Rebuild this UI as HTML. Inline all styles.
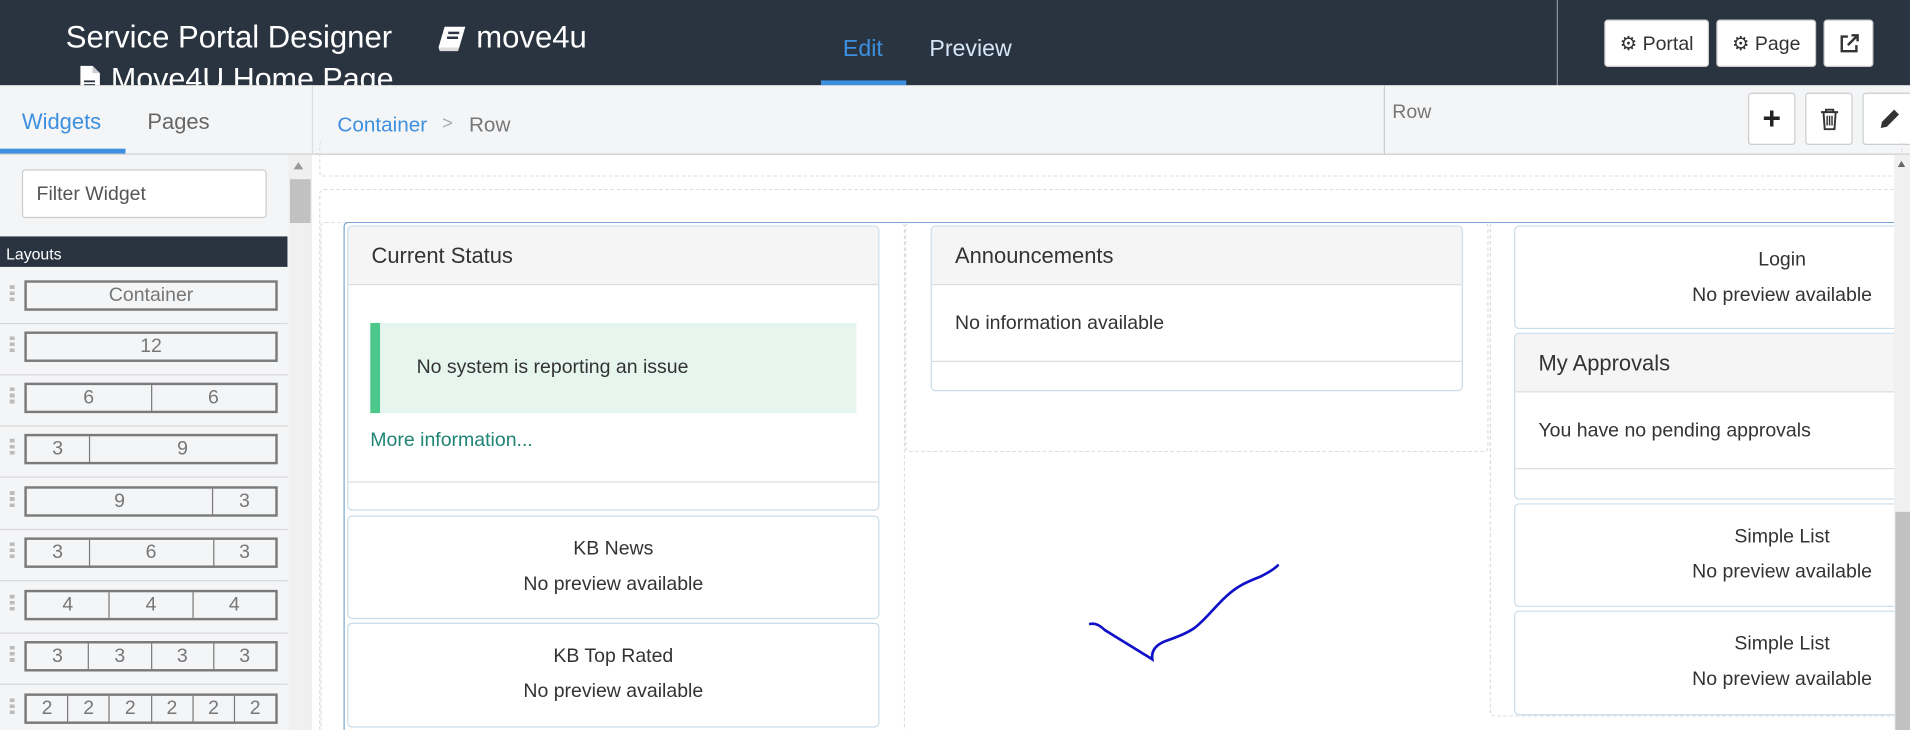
<!DOCTYPE html>
<html><head><meta charset="utf-8"><style>
*{box-sizing:border-box;margin:0;padding:0}
html,body{width:1910px;height:730px;overflow:hidden;background:#fff}
body{font-family:"Liberation Sans",Arial,sans-serif;color:#333}
#s{position:absolute;left:0;top:0;width:1568px;height:599px;transform:scale(1.2181,1.2187);transform-origin:0 0;overflow:hidden}
.a{position:absolute}
.hdr{left:0;top:0;width:1568px;height:70px;background:#2a3440;overflow:hidden}
.btn{background:#fff;border:1px solid #ccc;border-radius:3px;color:#333;font-size:16px;display:flex;align-items:center;justify-content:center;gap:5px}
.bar{left:0;top:70px;width:1568px;height:57px;background:#f4f5f7;border-bottom:1px solid #ccc}
.side{left:0;top:127px;width:256px;height:472px;background:#f4f5f7;border-right:1px solid #ddd}
.lrow{position:absolute;left:0;width:236px;height:42px;border-bottom:1px solid #d8d8d8}
.lbox{position:absolute;left:20px;top:6px;width:208px;height:25px;border:2px solid #7a7a7a;display:flex;background:#f4f5f7}
.lbox div{border-right:1px solid #7a7a7a;text-align:center;font-size:16px;color:#777;line-height:21px}
.lbox div:last-child{border-right:none}
.grip{position:absolute;left:8px;top:10px;width:4px;height:14px;background:repeating-linear-gradient(#bbb 0 3px,transparent 3px 5px)}
.dash{border:1px dashed #ddd;border-radius:4px}
.card{border:1px solid #c9dce9;border-radius:4px;background:#fff;overflow:hidden}
.ph{background:#f5f5f5;border-bottom:1px solid #ddd;height:48px;padding-left:19px;font-size:18px;line-height:48px;color:#333}
.np{text-align:center;font-size:16px;color:#333}
</style></head><body><div id="s">

<div class="a hdr">
 <div class="a" style="left:54px;top:17px;font-size:25.5px;color:#fff">Service Portal Designer</div>
 <svg class="a" style="left:359px;top:21px" width="26" height="22" viewBox="0 0 26 22"><path d="M6 1h17l-5 17H1z" fill="#fff"/><path d="M1 18h17l-1 3H2z" fill="#ddd"/><rect x="9" y="5" width="9" height="2" fill="#2a3440"/><rect x="8" y="9" width="9" height="2" fill="#2a3440"/></svg>
 <div class="a" style="left:391px;top:17px;font-size:25.5px;color:#fff">move4u</div>
 <svg class="a" style="left:64px;top:54px" width="20" height="22" viewBox="0 0 20 22"><path d="M2 0h10l6 6v16H2z" fill="#fff"/><path d="M12 0v6h6" fill="#ccc"/><rect x="5" y="12" width="9" height="1.5" fill="#2a3440"/><rect x="5" y="15" width="9" height="1.5" fill="#2a3440"/></svg>
 <div class="a" style="left:91px;top:51px;font-size:25px;color:#fff">Move4U Home Page</div>
 <div class="a" style="left:692px;top:30px;font-size:19px;color:#3d8fe0">Edit</div>
 <div class="a" style="left:674px;top:66px;width:70px;height:4px;background:#3d8fe0"></div>
 <div class="a" style="left:763px;top:30px;font-size:19px;color:#d4e6f7">Preview</div>
 <div class="a" style="left:1278px;top:0;width:1px;height:70px;background:#8a939c"></div>
 <div class="a btn" style="left:1317px;top:16px;width:86px;height:39px">⚙&nbsp;Portal</div>
 <div class="a btn" style="left:1409px;top:16px;width:82px;height:39px">⚙&nbsp;Page</div>
 <div class="a btn" style="left:1497px;top:16px;width:41px;height:39px"><svg width="18" height="18" viewBox="0 0 18 18"><path d="M8 3H3v12h12v-5" fill="none" stroke="#333" stroke-width="2"/><path d="M8 10l8-8M11 2h5v5" fill="none" stroke="#333" stroke-width="2"/></svg></div>
</div>

<div class="a bar">
 <div class="a" style="left:256px;top:0;width:1px;height:57px;background:#ddd"></div>
 <div class="a" style="left:18px;top:20px;font-size:18px;color:#3d8fe0">Widgets</div>
 <div class="a" style="left:121px;top:20px;font-size:18px;color:#666">Pages</div>
 <div class="a" style="left:0;top:52px;width:103px;height:4px;background:#3d8fe0"></div>
 <div class="a" style="left:277px;top:23px;font-size:17px;color:#3d8fe0">Container</div>
 <div class="a" style="left:363px;top:23px;font-size:15px;color:#aaa">&gt;</div>
 <div class="a" style="left:385px;top:23px;font-size:17px;color:#777">Row</div>
 <div class="a" style="left:1136px;top:0;width:1px;height:57px;background:#ccc"></div>
 <div class="a" style="left:1143px;top:14px;font-size:16px;color:#777">Row</div>
 <div class="a btn" style="left:1435px;top:6px;width:39px;height:43px;font-size:26px;font-weight:bold;color:#222">+</div>
 <div class="a btn" style="left:1482px;top:6px;width:39px;height:43px"><svg width="16" height="18" viewBox="0 0 16 18"><path d="M1 3h14M5 3V1h6v2M3 3l1 14h8l1-14" fill="none" stroke="#333" stroke-width="1.6"/><path d="M6 6v8M8 6v8M10 6v8" stroke="#333" stroke-width="1.2"/></svg></div>
 <div class="a btn" style="left:1529px;top:6px;width:45px;height:43px;justify-content:flex-start;padding-left:12px"><svg width="18" height="18" viewBox="0 0 18 18"><path d="M2 16l1-5L13 1l4 4L7 15z" fill="#333"/></svg></div>
</div>

<div class="a side">
 <div class="a" style="left:237px;top:0;width:19px;height:472px;background:#f0f0f0"></div>
 <div class="a" style="left:241px;top:6px;width:0;height:0;border:4px solid transparent;border-bottom:6px solid #999;border-top:none"></div>
 <div class="a" style="left:238px;top:20px;width:17px;height:36px;background:#c1c1c1"></div>
 <div class="a" style="left:18px;top:12px;width:201px;height:40px;background:#fff;border:1px solid #ccc;border-radius:3px;font-size:16px;color:#555;padding:11px 0 0 11px">Filter Widget</div>
 <div class="a" style="left:0;top:67px;width:236px;height:25px;background:#2a3440;color:#fff;font-size:13px;padding:7px 0 0 5px">Layouts</div>
 <div class="lrow" style="top:97px"><div class="grip"></div><div class="lbox"><div style="flex:1">Container</div></div></div>
 <div class="lrow" style="top:139px"><div class="grip"></div><div class="lbox"><div style="flex:1">12</div></div></div>
 <div class="lrow" style="top:181px"><div class="grip"></div><div class="lbox"><div style="flex:6">6</div><div style="flex:6">6</div></div></div>
 <div class="lrow" style="top:223px"><div class="grip"></div><div class="lbox"><div style="flex:3">3</div><div style="flex:9">9</div></div></div>
 <div class="lrow" style="top:266px"><div class="grip"></div><div class="lbox"><div style="flex:9">9</div><div style="flex:3">3</div></div></div>
 <div class="lrow" style="top:308px"><div class="grip"></div><div class="lbox"><div style="flex:3">3</div><div style="flex:6">6</div><div style="flex:3">3</div></div></div>
 <div class="lrow" style="top:351px"><div class="grip"></div><div class="lbox"><div style="flex:1">4</div><div style="flex:1">4</div><div style="flex:1">4</div></div></div>
 <div class="lrow" style="top:393px"><div class="grip"></div><div class="lbox"><div style="flex:1">3</div><div style="flex:1">3</div><div style="flex:1">3</div><div style="flex:1">3</div></div></div>
 <div class="lrow" style="top:436px"><div class="grip"></div><div class="lbox"><div style="flex:1">2</div><div style="flex:1">2</div><div style="flex:1">2</div><div style="flex:1">2</div><div style="flex:1">2</div><div style="flex:1">2</div></div></div>
</div>

<!-- canvas -->
<div class="a dash" style="left:262px;top:115px;width:1300px;height:30px;border-top:none"></div>
<div class="a dash" style="left:262px;top:155px;width:1300px;height:460px"></div>
<div class="a dash" style="left:263px;top:182px;width:480px;height:430px"></div>
<div class="a dash" style="left:743px;top:182px;width:479px;height:189px"></div>
<div class="a dash" style="left:1223px;top:182px;width:340px;height:406px"></div>
<div class="a" style="left:282px;top:182px;width:1280px;height:430px;border:1px solid #7aa7cf;border-radius:4px;border-right:none"></div>

<div class="a card" style="left:285px;top:185px;width:437px;height:234px">
 <div class="ph">Current Status</div>
 <div class="a" style="left:18px;top:79px;width:399px;height:74px;background:#e6f6ee;border-left:8px solid #4bc88a;font-size:16px;padding:28px 0 0 30px;color:#333">No system is reporting an issue</div>
 <div class="a" style="left:18px;top:167px;font-size:16px;color:#1f8476">More information...</div>
 <div class="a" style="left:0;top:209px;width:437px;height:1px;background:#ddd"></div>
</div>
<div class="a card" style="left:285px;top:423px;width:437px;height:85px"><div class="np" style="margin-top:18px">KB News</div><div class="np" style="margin-top:11px">No preview available</div></div>
<div class="a card" style="left:285px;top:511px;width:437px;height:86px"><div class="np" style="margin-top:18px">KB Top Rated</div><div class="np" style="margin-top:11px">No preview available</div></div>

<div class="a card" style="left:764px;top:185px;width:437px;height:136px">
 <div class="ph">Announcements</div>
 <div class="a" style="left:19px;top:71px;font-size:16px">No information available</div>
 <div class="a" style="left:0;top:110px;width:437px;height:1px;background:#ddd"></div>
</div>

<div class="a card" style="left:1243px;top:185px;width:440px;height:85px"><div class="np" style="margin-top:19px;width:438px">Login</div><div class="np" style="margin-top:11px;width:438px">No preview available</div></div>
<div class="a card" style="left:1243px;top:273px;width:440px;height:137px">
 <div class="ph">My Approvals</div>
 <div class="a" style="left:19px;top:71px;font-size:16px">You have no pending approvals</div>
 <div class="a" style="left:0;top:110px;width:440px;height:1px;background:#ddd"></div>
</div>
<div class="a card" style="left:1243px;top:413px;width:440px;height:85px"><div class="np" style="margin-top:18px;width:438px">Simple List</div><div class="np" style="margin-top:11px;width:438px">No preview available</div></div>
<div class="a card" style="left:1243px;top:501px;width:440px;height:86px"><div class="np" style="margin-top:18px;width:438px">Simple List</div><div class="np" style="margin-top:11px;width:438px">No preview available</div></div>

<div class="a" style="left:1555px;top:127px;width:13px;height:472px;background:#f0f0f0"></div>
<div class="a" style="left:1558px;top:132px;width:0;height:0;border:3px solid transparent;border-bottom:5px solid #666;border-top:none"></div>
<div class="a" style="left:1556px;top:420px;width:12px;height:179px;background:#c1c1c1"></div>

<svg class="a" style="left:0;top:0" width="1568" height="599"><path d="M895 512c4-1 8 1 12 5l39 24c-1-7 3-12 11-15c8-3 17-6 24-11c10-8 17-18 26-26c10-9 18-12 28-16c6-3 11-6 14-9" fill="none" stroke="#1010c8" stroke-width="2.2" stroke-linecap="round"/></svg>
</div></body></html>
